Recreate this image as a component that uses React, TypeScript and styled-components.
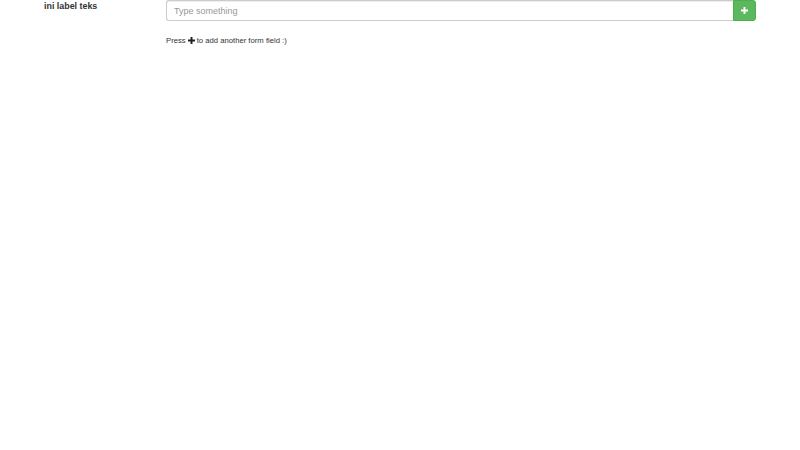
import styled, { createGlobalStyle } from "styled-components";

const Global = createGlobalStyle`
  html, body {
    margin: 0;
    padding: 0;
    background: #ffffff;
    font-family: "Liberation Sans", Arial, sans-serif;
    color: #333333;
  }
`;

const Form = styled.form`
  display: grid;
  grid-template-columns: 166px 1fr;
  padding-right: 44px;
`;

const Label = styled.label`
  padding: 0 0 0 44px;
  font-size: 8.9px;
  font-weight: bold;
  line-height: 12px;
`;

const InputGroup = styled.div`
  display: flex;
  height: 21px;
`;

const Input = styled.input`
  flex: 1;
  min-width: 0;
  box-sizing: border-box;
  height: 21px;
  margin: 0;
  padding: 1px 7px 0;
  border: 1px solid #cccccc;
  border-right: none;
  border-radius: 3px 0 0 3px;
  box-shadow: inset 0 1px 1px rgba(0, 0, 0, 0.075);
  font-family: inherit;
  font-size: 9px;
  color: #555555;
  outline: none;

  &::placeholder {
    color: #999999;
  }
`;

const AddButton = styled.button`
  display: flex;
  align-items: center;
  justify-content: center;
  width: 23px;
  height: 21px;
  margin: 0;
  padding: 0;
  border: 1px solid #4cae4c;
  border-radius: 0 3px 3px 0;
  background: #5cb85c;
  color: #ffffff;
  cursor: pointer;
`;

const Help = styled.p`
  grid-column: 2;
  display: flex;
  align-items: center;
  gap: 2px;
  margin: 14px 0 0;
  font-size: 7.7px;
  line-height: 11px;
  color: #333333;
`;

const Plus = ({ size, color }: { size: number; color: string }) => (
  <svg width={size} height={size} viewBox="0 0 10 10" aria-hidden="true">
    <path d="M3.6 0h2.8v3.6H10v2.8H6.4V10H3.6V6.4H0V3.6h3.6z" fill={color} />
  </svg>
);

export default function App() {
  return (
    <>
      <Global />
      <Form onSubmit={e => e.preventDefault()}>
        <Label htmlFor="field">ini label teks</Label>
        <InputGroup>
          <Input id="field" type="text" placeholder="Type something" />
          <AddButton type="button">
            <Plus size={7} color="#ffffff" />
          </AddButton>
        </InputGroup>
        <Help>
          Press <Plus size={7} color="#222222" /> to add another form field :)
        </Help>
      </Form>
    </>
  );
}
